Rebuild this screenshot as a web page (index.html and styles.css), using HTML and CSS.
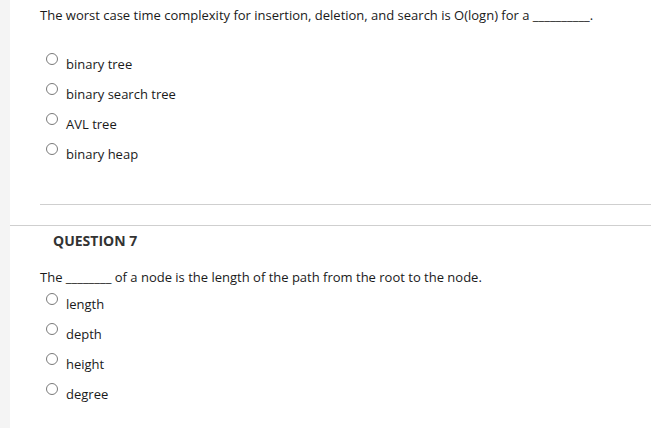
FILE: index.html
```html
<!DOCTYPE html>
<html>
<head>
<meta charset="utf-8">
<link rel="stylesheet" href="styles.css">
</head>
<body>
<div class="page">
  <div class="strip"></div>
  <div class="main">
    <div class="question q6">
      <p class="qtext">The worst case time complexity for insertion, deletion, and search is O(logn) for a __________.</p>
      <ul class="options first">
        <li class="option"><span class="radio"></span><span class="label">binary tree</span></li>
        <li class="option"><span class="radio"></span><span class="label">binary search tree</span></li>
        <li class="option"><span class="radio"></span><span class="label">AVL tree</span></li>
        <li class="option"><span class="radio"></span><span class="label">binary heap</span></li>
      </ul>
      <div class="inner-rule"></div>
    </div>
    <div class="outer-rule"></div>
    <div class="question q7">
      <h3 class="qtitle">QUESTION 7</h3>
      <p class="qtext">The ________ of a node is the length of the path from the root to the node.</p>
      <ul class="options second">
        <li class="option"><span class="radio"></span><span class="label">length</span></li>
        <li class="option"><span class="radio"></span><span class="label">depth</span></li>
        <li class="option"><span class="radio"></span><span class="label">height</span></li>
        <li class="option"><span class="radio"></span><span class="label">degree</span></li>
      </ul>
    </div>
  </div>
</div>
</body>
</html>
```

FILE: styles.css
```css
html, body {
  margin: 0;
  padding: 0;
  background: #ffffff;
}
body {
  font-family: "Open Sans", "Liberation Sans", sans-serif;
  font-size: 13px;
  color: #1a1a1a;
}
.page {
  display: flex;
  min-height: 428px;
}
.strip {
  width: 10px;
  flex: 0 0 10px;
  background: #f4f4f4;
}
.main {
  flex: 1;
  display: flex;
  flex-direction: column;
}
.question {
  padding-left: 30px;
}
.qtext {
  margin: 0;
  line-height: 18px;
}
.q6 .qtext {
  margin-top: 6px;
}
.options {
  list-style: none;
  margin: 0;
  padding: 0 0 0 6px;
}
.options.first {
  margin-top: 28px;
}
.options.second {
  margin-top: 6px;
}
.option {
  display: flex;
  align-items: flex-start;
  height: 30px;
  line-height: 24px;
}
.radio {
  box-sizing: border-box;
  width: 12px;
  height: 12px;
  margin-top: 1px;
  border: 1px solid #7a7a7a;
  border-radius: 50%;
  background: #fff;
  flex: 0 0 12px;
}
.label {
  margin-left: 8px;
}
.inner-rule {
  margin-top: 32px;
  height: 1px;
  background: #cfcfcf;
}
.outer-rule {
  margin-top: 20px;
  height: 1px;
  background: #cfcfcf;
}
.qtitle {
  margin: 6px 0 0 13px;
  font-size: 14px;
  font-weight: 700;
  line-height: 18px;
  color: #333333;
}
.q7 .qtext {
  margin-top: 18px;
}
```
